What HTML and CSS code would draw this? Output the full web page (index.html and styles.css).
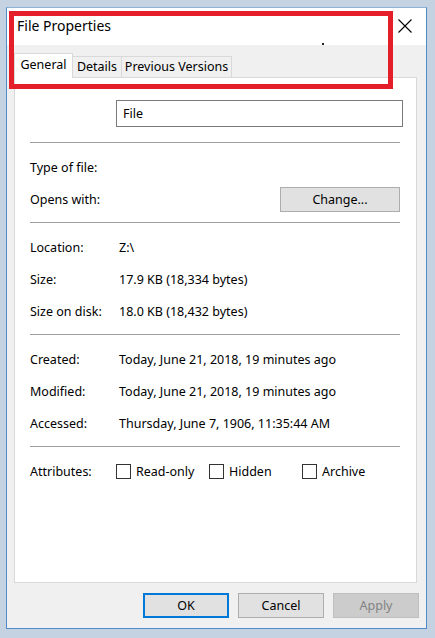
FILE: index.html
```html
<!DOCTYPE html>
<html>
<head>
    <title>File Properties</title>
    <meta name="viewport" content="width=device-width, initial-scale=1.0">
    <link rel="stylesheet" href="styles.css">
</head>
<body>
    <!-- 属性窗口 -->
    <div class="window">
        <div class="titlebar">
            <span class="title">File Properties</span>
            <span class="close">
                <svg width="14" height="14" viewBox="0 0 14 14"><path d="M0.5 0.5 L13.5 13.5 M13.5 0.5 L0.5 13.5" stroke="#000" stroke-width="1.1" fill="none"/></svg>
            </span>
        </div>

        <div class="client">
            <!-- 标签页 -->
            <div class="tabs">
                <div class="tab active">General</div>
                <div class="tab details">Details</div>
                <div class="tab versions">Previous Versions</div>
            </div>

            <div class="panel">
                <div class="name-row">
                    <div class="file-icon"></div>
                    <div class="name-box">File</div>
                </div>
                <div class="sep first"></div>

                <div class="row"><span class="label">Type of file:</span></div>
                <div class="row"><span class="label">Opens with:</span><button class="btn change">Change...</button></div>
                <div class="sep"></div>

                <div class="row"><span class="label">Location:</span><span class="value">Z:\</span></div>
                <div class="row"><span class="label">Size:</span><span class="value">17.9 KB (18,334 bytes)</span></div>
                <div class="row"><span class="label">Size on disk:</span><span class="value">18.0 KB (18,432 bytes)</span></div>
                <div class="sep"></div>

                <div class="row"><span class="label">Created:</span><span class="value">Today, June 21, 2018, 19 minutes ago</span></div>
                <div class="row"><span class="label">Modified:</span><span class="value">Today, June 21, 2018, 19 minutes ago</span></div>
                <div class="row"><span class="label">Accessed:</span><span class="value">Thursday, June 7, 1906, 11:35:44 AM</span></div>
                <div class="sep"></div>

                <div class="row attrs">
                    <span class="label">Attributes:</span>
                    <label class="check"><span class="box"></span>Read-only</label>
                    <label class="check"><span class="box"></span>Hidden</label>
                    <label class="check"><span class="box"></span>Archive</label>
                </div>
            </div>

            <!-- 底部按钮 -->
            <div class="buttons">
                <button class="btn default">OK</button>
                <button class="btn">Cancel</button>
                <button class="btn disabled">Apply</button>
            </div>
        </div>
    </div>

    <!-- 红色标注框 -->
    <div class="highlight"></div>
    <span class="speck"></span>
</body>
</html>
```

FILE: styles.css
```css
/* 全局样式 */
body {
    margin: 0;
    padding: 7px 8px 9px 6px;
    background-color: #c4d2e1;
    font-family: "Noto Sans", "Open Sans", sans-serif;
    font-size: 12.5px;
    color: #000;
    position: relative;
}

/* 窗口 */
.window {
    width: 419px;
    height: 620px;
    border: 1px solid #4f8ac9;
    border-top-color: #8fb1d8;
    background: #f0f0f0;
    display: flex;
    flex-direction: column;
}
.titlebar {
    height: 37px;
    background: #fff;
    display: flex;
    align-items: center;
    justify-content: space-between;
    padding: 0 14px 0 10px;
}
.title {
    font-size: 14px;
    margin-top: -2px;
}
.close {
    display: flex;
    margin-top: -1px;
}

.client {
    flex: 1;
    display: flex;
    flex-direction: column;
    padding: 8px 7px 10px 7px;
}

/* 标签页 */
.tabs {
    display: flex;
    align-items: flex-end;
    height: 24px;
    position: relative;
    z-index: 1;
}
.tab {
    height: 21px;
    line-height: 20px;
    text-align: center;
    border: 1px solid #d9d9d9;
    border-bottom: none;
    border-left: none;
    background: #f0f0f0;
    box-sizing: border-box;
}
.tab.active {
    width: 59px;
    height: 25px;
    margin-bottom: -1px;
    background: #fff;
    border-left: 1px solid #d9d9d9;
    line-height: 22px;
}
.tab.details {
    width: 49px;
}
.tab.versions {
    width: 110px;
}

.panel {
    width: 403px;
    height: 506px;
    box-sizing: border-box;
    border: 1px solid #d9d9d9;
    background: #fff;
    padding: 22px 16px 0 15px;
    display: flex;
    flex-direction: column;
}

.name-row {
    display: flex;
    height: 27px;
}
.file-icon {
    width: 86px;
}
.name-box {
    flex: 1;
    margin-right: -3px;
    border: 1px solid #7a7a7a;
    padding: 0 6px;
    line-height: 25px;
}

.sep {
    height: 1px;
    background: #a0a0a0;
    margin: 7px 0 8px;
}
.sep.first {
    margin-top: 15px;
}

.row {
    height: 32px;
    display: flex;
    align-items: center;
}
.label {
    width: 89px;
    flex-shrink: 0;
}

/* 复选框 */
.attrs .label {
    width: 86px;
}
.check {
    width: 93px;
    display: flex;
    align-items: center;
}
.box {
    width: 13px;
    height: 13px;
    border: 1px solid #333;
    background: #fff;
    margin-right: 5px;
}

/* 按钮 */
.btn {
    font-family: inherit;
    font-size: 12.5px;
    height: 25px;
    width: 86px;
    background: #e1e1e1;
    border: 1px solid #adadad;
    color: #000;
    padding: 0;
}
.btn.change {
    width: 120px;
    margin-left: auto;
}
.btn.default {
    border: 2px solid #0078d7;
}
.btn.disabled {
    background: #cccccc;
    border-color: #bfbfbf;
    color: #838383;
}
.buttons {
    display: flex;
    justify-content: flex-end;
    gap: 9px;
    margin-top: 10px;
}

/* 红色标注框 */
.highlight {
    position: absolute;
    left: 9px;
    top: 11px;
    width: 374px;
    height: 68px;
    border: 5px solid #e51f2a;
}
.speck {
    position: absolute;
    left: 322px;
    top: 43px;
    width: 2px;
    height: 2px;
    background: #222;
}
```
